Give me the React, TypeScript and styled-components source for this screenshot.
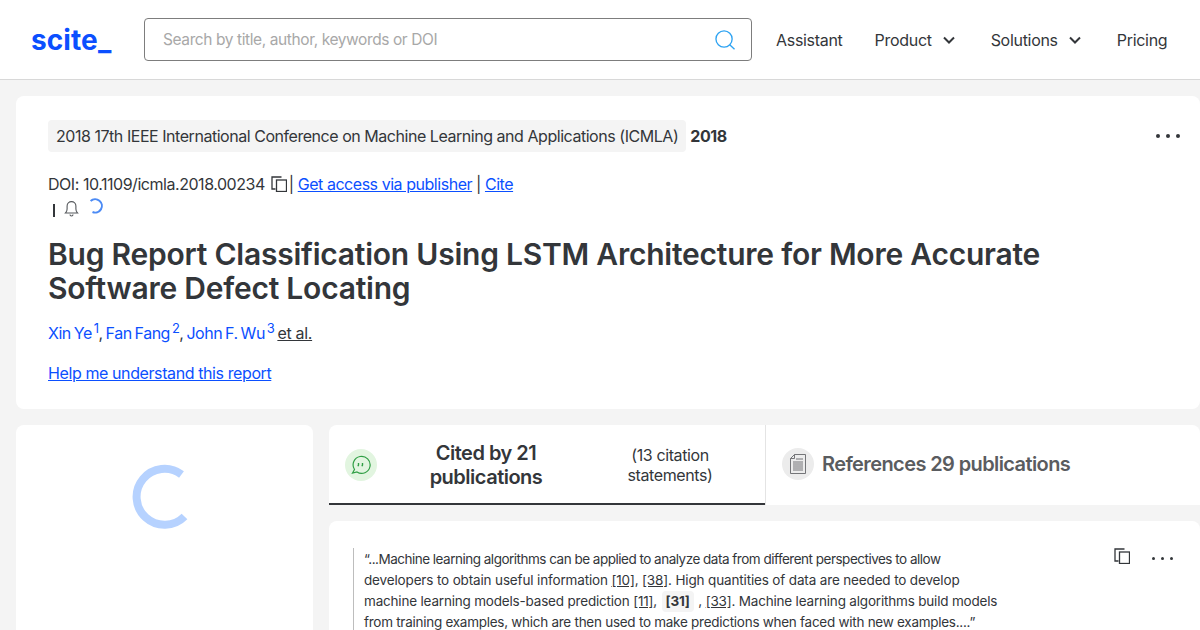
import styled, { createGlobalStyle } from "styled-components";

const Global = createGlobalStyle`
  html, body {
    margin: 0;
    padding: 0;
    height: 630px;
    overflow: hidden;
    background: #f4f4f4;
    font-family: Inter, "Liberation Sans", sans-serif;
    color: #33363a;
  }
  * { box-sizing: border-box; }
`;

function CopyIcon() {
  return (
    <svg width="16" height="16" viewBox="0 0 16 16" fill="none" stroke="#33363a" strokeWidth="1.3">
      <path d="M10.500 1H1v12h3.500" />
      <rect x="5.500" y="4" width="10" height="11.500" />
    </svg>
  );
}

function Chevron() {
  return (
    <ChevronSvg width="12" height="8" viewBox="0 0 12 8" fill="none" stroke="#33363a" strokeWidth="2">
      <path d="M1 1.500l5 5 5-5" />
    </ChevronSvg>
  );
}

function App() {
  return (
    <Page>
      <Global />
      <Header>
        <Logo>scite_</Logo>
        <SearchBox>
          <SearchText>Search by title, author, keywords or DOI</SearchText>
          <svg width="20" height="20" viewBox="0 0 21 21" fill="none" stroke="#2ea3f2" strokeWidth="1.4">
            <circle cx="9.500" cy="9.500" r="8.500" />
            <path d="M15.500 15.500l5 4.800" />
          </svg>
        </SearchBox>
        <Nav>
          <NavItem>Assistant</NavItem>
          <NavItem>
            Product
            <Chevron />
          </NavItem>
          <NavItem>
            Solutions
            <Chevron />
          </NavItem>
          <NavItem>Pricing</NavItem>
        </Nav>
      </Header>
      <Main>
        <TopCard>
          <VenueRow>
            <VenueChip>2018 17th IEEE International Conference on Machine Learning and Applications (ICMLA)</VenueChip>
            <Year>2018</Year>
            <MoreSlot>
              <Dot />
              <Dot />
              <Dot />
            </MoreSlot>
          </VenueRow>
          <DoiRow>
            DOI: 10.1109/icmla.2018.00234
            <CopySlot>
              <CopyIcon />
            </CopySlot>
            <span>|</span>
            <BlueLink>Get access via publisher</BlueLink>
            <span>|</span>
            <BlueLink>Cite</BlueLink>
          </DoiRow>
          <ActionRow>
            <Bar />
            <svg width="15" height="18" viewBox="0 0 15 18" fill="none" stroke="#55585c" strokeWidth="1.100">
              <path d="M1.500 14c1.200-1.200 1.600-2.200 1.600-4V7a4.400 4.400 0 0 1 8.800 0v3c0 1.800.4 2.800 1.600 4z" />
              <path d="M6 15.500a1.500 1.500 0 0 0 3 0" />
            </svg>
            <SmallSpinner viewBox="0 0 16 18" width="16" height="18" fill="none">
              <path d="M2.600 4A6.700 6.700 0 1 1 4.500 15" stroke="#4c8bf5" strokeWidth="2" />
            </SmallSpinner>
          </ActionRow>
          <Title>Bug Report Classification Using LSTM Architecture for More Accurate Software Defect Locating</Title>
          <Authors>
            <BlueText>Xin Ye</BlueText>
            <Sup>1</Sup>, <BlueText>Fan Fang</BlueText>
            <Sup>2</Sup>, <BlueText>John F. Wu</BlueText>
            <Sup>3</Sup> <EtAl>et al.</EtAl>
          </Authors>
          <HelpLink>Help me understand this report</HelpLink>
        </TopCard>
        <Columns>
          <Side>
            <svg width="70" height="70" viewBox="0 0 70 70" fill="none">
              <path d="M51.500 12.500A28 28 0 1 0 54.500 54.500" stroke="#b6d2ff" strokeWidth="8" />
            </svg>
          </Side>
          <Content>
            <Tabs>
              <TabActive>
                <Round $bg="#e2f5e0">
                  <svg width="20" height="20" viewBox="0 0 20 20" fill="none" stroke="#2f9e44" strokeWidth="1.200">
                    <path d="M3.500 14.500A8.500 8.500 0 1 1 6 17l-4.500 1z" />
                    <path d="M7.500 8v2l-.6 1.200M11.500 8v2l-.6 1.200" strokeWidth="1.400" />
                  </svg>
                </Round>
                <CitedTitle>Cited by 21 publications</CitedTitle>
                <CitedNote>(13 citation statements)</CitedNote>
              </TabActive>
              <TabPlain>
                <Round $bg="#ececec">
                  <svg width="18" height="22" viewBox="0 0 18 22" fill="none" stroke="#66686b" strokeWidth="0.900">
                    <path d="M5.500 1.500H16.500v19H1.500V5.500z" />
                    <path d="M5.500 1.500v4h-4M7 6h7M4 9h10M4 11h10M4 13h10M4 15h10M4 17h10" />
                  </svg>
                </Round>
                <RefTitle>References 29 publications</RefTitle>
              </TabPlain>
            </Tabs>
            <QuoteCard>
              <Quote>
                <QuoteLine $track={-0.5}>
                  “...Machine learning algorithms can be applied to analyze data from different perspectives to allow
                </QuoteLine>
                <QuoteLine $track={-0.15}>
                  developers to obtain useful information <Cite>[10]</Cite>, <Cite>[38]</Cite>. High quantities of data
                  are needed to develop
                </QuoteLine>
                <QuoteLine $track={-0.19}>
                  machine learning models-based prediction <Cite>[11]</Cite>, <CiteStrong>[31]</CiteStrong> ,{" "}
                  <Cite>[33]</Cite>. Machine learning algorithms build models
                </QuoteLine>
                <QuoteLine $track={-0.27}>
                  from training examples, which are then used to make predictions when faced with new examples....”
                </QuoteLine>
              </Quote>
              <QuoteTools>
                <CopyIcon />
                <SmallDots>
                  <SmallDot />
                  <SmallDot />
                  <SmallDot />
                </SmallDots>
              </QuoteTools>
            </QuoteCard>
          </Content>
        </Columns>
      </Main>
    </Page>
  );
}

export default App;

const Page = styled.div`
  width: 1200px;
  height: 630px;
  overflow: hidden;
`;

const Header = styled.header`
  display: flex;
  align-items: center;
  height: 80px;
  padding: 0 32px;
  background: #fff;
  border-bottom: 1px solid #d8d8d8;
`;

const Logo = styled.div`
  flex: none;
  width: 112px;
  margin-left: -1px;
  margin-right: 1px;
  font-size: 28px;
  font-weight: 700;
  color: #0b4fff;
  letter-spacing: 0.1px;
`;

const SearchBox = styled.div`
  display: flex;
  flex: none;
  align-items: center;
  justify-content: space-between;
  width: 608px;
  height: 43px;
  padding: 0 16px 0 18px;
  border: 1px solid #7d7d7d;
  border-radius: 4px;
`;

const SearchText = styled.span`
  font-size: 15.5px;
  letter-spacing: -0.4px;
  color: #a8a8a8;
`;

const Nav = styled.nav`
  display: flex;
  align-items: center;
  gap: 32px;
  margin-left: 24px;
`;

const NavItem = styled.div`
  display: flex;
  align-items: center;
  gap: 11px;
  font-size: 16px;
  letter-spacing: -0.3px;
  color: #33363a;
`;

const ChevronSvg = styled.svg`
  margin-right: 4px;
`;

const Main = styled.main`
  padding: 16px 0 0 16px;
`;

const TopCard = styled.section`
  height: 313px;
  padding: 24px 32px;
  background: #fff;
  border-radius: 8px;
  font-size: 16px;
  letter-spacing: -0.46px;
`;

const VenueRow = styled.div`
  display: flex;
  align-items: center;
  gap: 4px;
`;

const VenueChip = styled.span`
  padding: 0 8px;
  height: 32px;
  line-height: 32px;
  background: #f4f4f4;
  border-radius: 4px;
`;

const Year = styled.span`
  font-weight: 700;
`;

const MoreSlot = styled.span`
  display: flex;
  gap: 6px;
  margin-left: auto;
  margin-right: -12px;
`;

const Dot = styled.i`
  width: 4px;
  height: 4px;
  border-radius: 50%;
  background: #33363a;
`;

const DoiRow = styled.div`
  display: flex;
  align-items: center;
  gap: 3px;
  margin-top: 20px;
  height: 24px;
`;

const CopySlot = styled.span`
  display: inline-flex;
  margin: 0 -1px 0 3px;
`;

const BlueLink = styled.a`
  color: #0b4fff;
  text-decoration: underline;
  margin: 0 1px;
`;

const ActionRow = styled.div`
  display: flex;
  align-items: center;
  gap: 9px;
  height: 24px;
  padding-left: 5px;
`;

const Bar = styled.span`
  width: 2px;
  height: 13px;
  margin-top: 4px;
  background: #33363a;
`;

const SmallSpinner = styled.svg`
  margin-top: -4px;
`;

const Title = styled.h1`
  margin: 17px 0 0;
  width: 1010px;
  font-size: 30px;
  line-height: 34px;
  font-weight: 600;
  letter-spacing: -0.23px;
  color: #33363a;
`;

const Authors = styled.div`
  margin-top: 16px;
  line-height: 24px;
  letter-spacing: -0.5px;
  word-spacing: -1px;
`;

const BlueText = styled.a`
  color: #0b4fff;
`;

const Sup = styled.sup`
  color: #0b4fff;
  font-size: 13px;
  line-height: 0;
  margin-left: 2px;
`;

const EtAl = styled.span`
  letter-spacing: -0.3px;
  word-spacing: 0;
  text-decoration: underline;
`;

const HelpLink = styled.a`
  display: block;
  margin-top: 16px;
  line-height: 24px;
  letter-spacing: -0.4px;
  color: #0b4fff;
  text-decoration: underline;
`;

const Columns = styled.div`
  display: flex;
  gap: 16px;
  margin-top: 16px;
`;

const Side = styled.aside`
  display: flex;
  justify-content: center;
  align-items: flex-start;
  width: 297px;
  height: 400px;
  padding-top: 37px;
  background: #fff;
  border-radius: 8px;
`;

const Content = styled.div`
  flex: 1;
  min-width: 0;
`;

const Tabs = styled.div`
  display: flex;
  height: 80px;
`;

const TabActive = styled.div`
  display: flex;
  align-items: center;
  width: 436px;
  padding: 2px 16px 0;
  background: #fff;
  border-radius: 8px 0 0 0;
  border-bottom: 2px solid #33363a;
`;

const TabPlain = styled.div`
  flex: 1;
  display: flex;
  align-items: center;
  gap: 8px;
  padding: 0 16px 2px;
  background: #fff;
  border-left: 1px solid #e4e4e4;
  border-radius: 0 8px 0 0;
`;

const Round = styled.span<{ $bg: string }>`
  display: flex;
  align-items: center;
  justify-content: center;
  flex: none;
  width: 32px;
  height: 32px;
  border-radius: 50%;
  background: ${(p) => p.$bg};
`;

const CitedTitle = styled.div`
  width: 218px;
  padding: 0 40px;
  text-align: center;
  font-size: 20px;
  line-height: 24px;
  font-weight: 600;
  letter-spacing: -0.5px;
`;

const CitedNote = styled.div`
  width: 150px;
  padding: 0 20px;
  text-align: center;
  font-size: 16px;
  line-height: 20px;
  letter-spacing: -0.4px;
`;

const RefTitle = styled.div`
  font-size: 20px;
  font-weight: 600;
  letter-spacing: -0.6px;
  color: #5a5c5f;
`;

const QuoteCard = styled.div`
  display: flex;
  margin-top: 16px;
  padding: 27px 24px;
  height: 200px;
  background: #fff;
  border-radius: 8px;
`;

const Quote = styled.div`
  width: 650px;
  padding: 1px 0 0 10px;
  border-left: 1px solid #bdbdbd;
  font-size: 13.5px;
  line-height: 21px;
`;

const QuoteLine = styled.div<{ $track: number }>`
  height: 21px;
  white-space: nowrap;
  letter-spacing: ${(p) => p.$track}px;
`;

const Cite = styled.span`
  text-decoration: underline;
`;

const CiteStrong = styled.span`
  display: inline-block;
  padding: 0 4px;
  margin: 0 1px;
  font-weight: 700;
  background: #f4f4f4;
  border-radius: 4px;
`;

const QuoteTools = styled.div`
  display: flex;
  align-items: flex-start;
  gap: 22px;
  margin-left: auto;
  padding-right: 3px;
`;

const SmallDots = styled.span`
  display: flex;
  gap: 6px;
  margin-top: 9px;
`;

const SmallDot = styled.i`
  width: 3px;
  height: 3px;
  border-radius: 50%;
  background: #33363a;
`;
